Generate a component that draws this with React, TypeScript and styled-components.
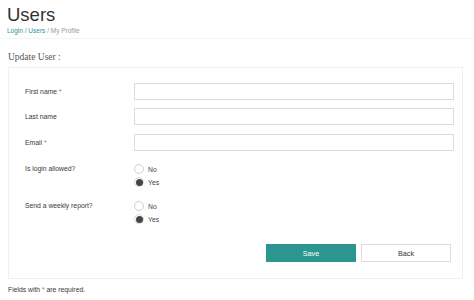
import React from "react";
import styled, { createGlobalStyle } from "styled-components";

const Global = createGlobalStyle`
  html, body { margin: 0; padding: 0; background: #fff; }
  body { font-family: "Liberation Sans", Arial, sans-serif; color: #333; }
  * { box-sizing: border-box; }
`;

const TEAL = "#2b958f";

const Page = styled.div`
  width: 474px;
  height: 300px;
  overflow: hidden;
`;

const Header = styled.header`
  padding: 4px 7px 3px 7px;
  border-bottom: 1px solid #f4f4f4;
`;

const Title = styled.h1`
  margin: 0;
  font-size: 18.5px;
  line-height: 21px;
  font-weight: 400;
  color: #333;
`;

const Crumbs = styled.div`
  font-size: 6.5px;
  line-height: 9px;
  margin-top: 1px;
  color: #999;
`;

const CrumbLink = styled.a`
  color: ${TEAL};
  text-decoration: none;
`;

const SectionTitle = styled.h2`
  margin: 12px 0 4px 8px;
  font-family: "Liberation Serif", "Times New Roman", serif;
  font-size: 9.5px;
  line-height: 12px;
  font-weight: 400;
  color: #555;
`;

const Panel = styled.form`
  margin: 0 11px 0 8px;
  border: 1px solid #f0f0f0;
  padding: 15px 8px 16px 16px;
  display: flex;
  flex-direction: column;
`;

const Row = styled.div<{ $gap?: number; $top?: boolean }>`
  display: grid;
  grid-template-columns: 109px 1fr;
  align-items: ${(p) => (p.$top ? "start" : "center")};
  margin-bottom: ${(p) => p.$gap ?? 8}px;
`;

const Label = styled.label`
  font-size: 6.8px;
  line-height: 10px;
  color: #3a3a3a;
`;

const Req = styled.span`
  color: #d9534f;
`;

const Input = styled.input`
  height: 17px;
  width: 100%;
  border: 1px solid #dcdcdc;
  background: #fff;
  font-size: 7px;
  padding: 0 4px;
  outline: none;
`;

const RadioGroup = styled.div`
  display: flex;
  flex-direction: column;
  gap: 3px;
`;

const Option = styled.label`
  display: flex;
  align-items: center;
  gap: 4px;
  height: 10px;
  font-size: 6.8px;
  color: #444;
`;

const Dot = styled.span<{ $on?: boolean }>`
  width: 10px;
  height: 10px;
  border-radius: 50%;
  border: 1px solid ${(p) => (p.$on ? "#d8d8d8" : "#cfcfcf")};
  background: #fff;
  display: flex;
  align-items: center;
  justify-content: center;
  &::after {
    content: "";
    width: 7px;
    height: 7px;
    border-radius: 50%;
    background: ${(p) => (p.$on ? "#454545" : "transparent")};
  }
`;

const Buttons = styled.div`
  display: flex;
  justify-content: flex-end;
  gap: 5px;
  padding-right: 3px;
  margin-top: 12px;
`;

const Button = styled.button<{ $primary?: boolean }>`
  width: 90px;
  height: 18px;
  font-family: inherit;
  font-size: 7.2px;
  border: 1px solid ${(p) => (p.$primary ? TEAL : "#dcdcdc")};
  background: ${(p) => (p.$primary ? TEAL : "#fff")};
  color: ${(p) => (p.$primary ? "#fff" : "#333")};
  padding: 0;
`;

const Note = styled.p`
  margin: 6px 0 0 8px;
  font-size: 6.8px;
  line-height: 10px;
  color: #3a3a3a;
`;

function Radios({ yes }: { yes: boolean }) {
  return (
    <RadioGroup>
      <Option>
        <Dot $on={!yes} /> No
      </Option>
      <Option>
        <Dot $on={yes} /> Yes
      </Option>
    </RadioGroup>
  );
}

export default function App() {
  return (
    <Page>
      <Global />
      <Header>
        <Title>Users</Title>
        <Crumbs>
          <CrumbLink>Login</CrumbLink> <CrumbLink as="span">/</CrumbLink>{" "}
          <CrumbLink>Users</CrumbLink> / My Profile
        </Crumbs>
      </Header>
      <SectionTitle>Update User :</SectionTitle>
      <Panel onSubmit={(e) => e.preventDefault()}>
        <Row>
          <Label>
            First name <Req>*</Req>
          </Label>
          <Input />
        </Row>
        <Row $gap={9}>
          <Label>Last name</Label>
          <Input />
        </Row>
        <Row $gap={13}>
          <Label>
            Email <Req>*</Req>
          </Label>
          <Input />
        </Row>
        <Row $top $gap={14}>
          <Label>Is login allowed?</Label>
          <Radios yes />
        </Row>
        <Row $top $gap={8}>
          <Label>Send a weekly report?</Label>
          <Radios yes />
        </Row>
        <Buttons>
          <Button $primary type="submit">Save</Button>
          <Button type="button">Back</Button>
        </Buttons>
      </Panel>
      <Note>
        Fields with <Req>*</Req> are required.
      </Note>
    </Page>
  );
}
